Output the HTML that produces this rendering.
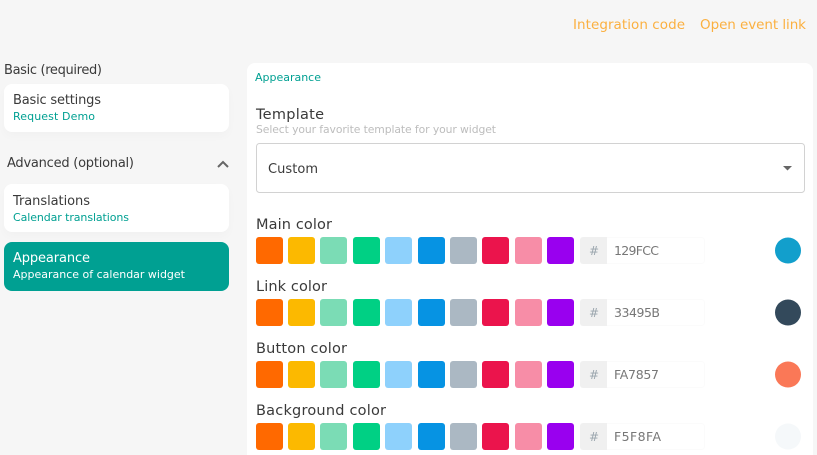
<!DOCTYPE html>
<html lang="en">
<head>
<meta charset="utf-8">
<title>Appearance</title>
<style>
html,body{margin:0;padding:0;width:817px;height:455px;overflow:hidden;background:#f6f6f6}
body{position:relative}
.c{position:absolute;border-radius:8px;background:#fff}
.s{box-shadow:0 4px 10px rgba(0,0,0,.025)}
svg{position:absolute;left:0;top:0;display:block}
text{font-family:"DejaVu Sans","Liberation Sans",sans-serif;fill:#3a3a3a;font-size:13px}
.o{fill:#fbb040;font-size:13.5px}
.t{fill:#00a092;font-size:11px}
.w{fill:#fff}
.h{fill:#777;font-size:12.500px}
.p{fill:#9aa5ad;font-size:12px}
.l{font-size:14.500px}
</style>
</head>
<body>
<div class="c" style="left:247px;top:63px;width:566px;height:392px;border-radius:8px 8px 0 0"></div>
<div class="c s" style="left:4px;top:84px;width:225px;height:48px"></div>
<div class="c s" style="left:4px;top:184px;width:225px;height:48px"></div>
<div class="c" style="left:4px;top:242px;width:225px;height:49px;background:#00a092"></div>
<svg width="817" height="455" viewBox="0 0 817 455">
<defs>
<g id="sw">
<rect x="256" width="27" height="27" rx="3" fill="#ff6900"/>
<rect x="288" width="27" height="27" rx="3" fill="#fcb900"/>
<rect x="320" width="27" height="27" rx="3" fill="#7bdcb5"/>
<rect x="353" width="27" height="27" rx="3" fill="#00d084"/>
<rect x="385" width="27" height="27" rx="3" fill="#8ed1fc"/>
<rect x="418" width="27" height="27" rx="3" fill="#0693e3"/>
<rect x="450" width="27" height="27" rx="3" fill="#abb8c3"/>
<rect x="482" width="27" height="27" rx="3" fill="#eb144c"/>
<rect x="515" width="27" height="27" rx="3" fill="#f78da7"/>
<rect x="547" width="27" height="27" rx="3" fill="#9900ef"/>
<rect x="580.5" y=".5" width="124" height="26" rx="3" fill="#fff" stroke="#fbfbfb"/>
<path d="M583 0h24v27h-24a3 3 0 0 1-3-3V3a3 3 0 0 1 3-3z" fill="#f0f0f0"/>
</g>
</defs>

<text class="o" x="573" y="29" textLength="112">Integration code</text>
<text class="o" x="700" y="29" textLength="106">Open event link</text>

<text x="4" y="74" textLength="98">Basic (required)</text>
<text x="13" y="104" textLength="88">Basic settings</text>
<text class="t" x="13" y="120" textLength="82">Request Demo</text>
<text x="7" y="167" textLength="127">Advanced (optional)</text>
<path d="M218 167l5-5 5 5" fill="none" stroke="#666" stroke-width="2"/>
<text x="13" y="205" textLength="77">Translations</text>
<text class="t" x="13" y="221" textLength="116">Calendar translations</text>
<text class="w" x="13" y="262" textLength="77">Appearance</text>
<text class="w" x="13" y="278" textLength="172" style="font-size:11px">Appearance of calendar widget</text>

<text class="t" x="255" y="81" textLength="66">Appearance</text>
<text class="l" x="256" y="119" textLength="68">Template</text>
<text x="256" y="133" textLength="240" style="font-size:10.800px;fill:#bdbdbd">Select your favorite template for your widget</text>
<rect x="256.5" y="143.5" width="548" height="49" rx="3" fill="#fff" stroke="#d2d2d2"/>
<text x="268" y="173" textLength="50">Custom</text>
<path d="M783 166h9l-4.500 4.500z" fill="#666"/>

<text class="l" x="256" y="229" textLength="76">Main color</text>
<use href="#sw" y="237"/>
<text class="p" x="589" y="255" textLength="8">#</text>
<text class="h" x="614" y="255" textLength="45">129FCC</text>
<circle cx="788" cy="250.500" r="13" fill="#129fcc"/>

<text class="l" x="256" y="291" textLength="71">Link color</text>
<use href="#sw" y="299"/>
<text class="p" x="589" y="317" textLength="8">#</text>
<text class="h" x="614" y="317" textLength="46">33495B</text>
<circle cx="788" cy="312.500" r="13" fill="#33495b"/>

<text class="l" x="256" y="353" textLength="91">Button color</text>
<use href="#sw" y="361"/>
<text class="p" x="589" y="379" textLength="8">#</text>
<text class="h" x="614" y="379" textLength="45">FA7857</text>
<circle cx="788" cy="374.500" r="13" fill="#fa7857"/>

<text class="l" x="256" y="415" textLength="130">Background color</text>
<use href="#sw" y="423"/>
<text class="p" x="589" y="441" textLength="8">#</text>
<text class="h" x="614" y="441" textLength="47">F5F8FA</text>
<circle cx="788" cy="436.500" r="13" fill="#f5f8fa"/>
</svg>
</body>
</html>
